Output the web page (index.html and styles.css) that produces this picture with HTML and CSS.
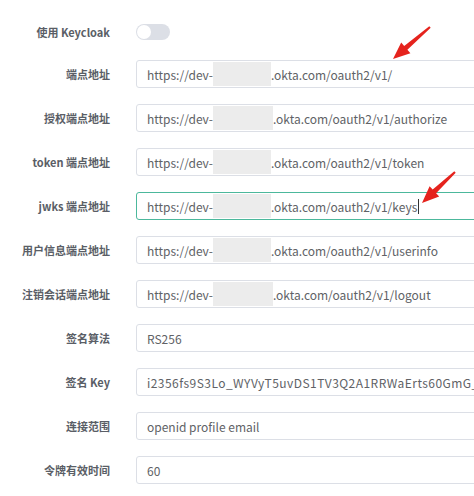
FILE: index.html
```html
<!DOCTYPE html>
<html lang="zh-CN">
<head>
  <meta charset="UTF-8">
  <meta name="viewport" content="width=device-width, initial-scale=1.0">
  <title>OIDC 设置</title>
  <link rel="stylesheet" href="styles.css">
</head>
<body>
  <div class="form">
    <div class="row row-switch">
      <label class="label">使用 Keycloak</label>
      <span class="switch"><span class="knob"></span></span>
    </div>
    <div class="row">
      <label class="label">端点地址</label>
      <div class="field">https://dev-<span class="mask w58"></span>.okta.com/oauth2/v1/</div>
    </div>
    <div class="row">
      <label class="label">授权端点地址</label>
      <div class="field">https://dev-<span class="mask w60"></span>.okta.com/oauth2/v1/authorize</div>
    </div>
    <div class="row">
      <label class="label">token 端点地址</label>
      <div class="field">https://dev-<span class="mask w58"></span>.okta.com/oauth2/v1/token</div>
    </div>
    <div class="row">
      <label class="label">jwks 端点地址</label>
      <div class="field focused">https://dev-<span class="mask w58"></span>.okta.com/oauth2/v1/keys<span class="caret"></span></div>
    </div>
    <div class="row">
      <label class="label">用户信息端点地址</label>
      <div class="field">https://dev-<span class="mask w58"></span>.okta.com/oauth2/v1/userinfo</div>
    </div>
    <div class="row">
      <label class="label">注销会话端点地址</label>
      <div class="field">https://dev-<span class="mask w60"></span>.okta.com/oauth2/v1/logout</div>
    </div>
    <div class="row">
      <label class="label">签名算法</label>
      <div class="field">RS256</div>
    </div>
    <div class="row">
      <label class="label">签名 Key</label>
      <div class="field key">i2356fs9S3Lo_WYVyT5uvDS1TV3Q2A1RRWaErts60GmG_c9xQeLk</div>
    </div>
    <div class="row">
      <label class="label">连接范围</label>
      <div class="field">openid profile email</div>
    </div>
    <div class="row">
      <label class="label">令牌有效时间</label>
      <div class="field">60</div>
    </div>
  </div>

  <!-- red pointer arrows drawn over the form -->
  <svg class="arrows" width="474" height="496" viewBox="0 0 474 496">
    <polygon points="393,59 410.4,53.2 407.4,49.8 430.7,27.8 429.3,26.2 404.2,46 401.2,42.6" />
    <polygon points="422,203 439.2,196.5 436.1,193.2 455.7,172.7 454.3,171.3 432.7,189.6 429.6,186.3" />
  </svg>
</body>
</html>
```

FILE: styles.css
```css
body {
  margin: 0;
  background: #ffffff;
  font-family: "Noto Sans CJK SC", "Noto Sans", sans-serif;
  width: 474px;
  height: 496px;
  overflow: hidden;
  position: relative;
}
.form {
  padding-top: 20px;
  display: flex;
  flex-direction: column;
  gap: 16px;
}
.row {
  display: grid;
  grid-template-columns: 110px 400px;
  column-gap: 26px;
  align-items: center;
  height: 28px;
}
.row-switch {
  height: 24px;
}
.label {
  text-align: right;
  font-size: 11px;
  font-weight: bold;
  color: #5a5e66;
  white-space: nowrap;
}
.switch {
  display: inline-block;
  position: relative;
  width: 34px;
  height: 16px;
  border-radius: 8px;
  background: #dcdfe6;
}
.knob {
  position: absolute;
  left: 1px;
  top: 1px;
  width: 14px;
  height: 14px;
  border-radius: 50%;
  background: #ffffff;
}
.field {
  box-sizing: border-box;
  height: 28px;
  padding: 0 10px;
  border: 1px solid #dcdfe6;
  border-radius: 3px;
  font-size: 12px;
  color: #606266;
  display: flex;
  align-items: center;
  white-space: nowrap;
  overflow: hidden;
}
.field.focused {
  border-color: #4cb89c;
}
/* long token, wider glyph run */
.field.key {
  letter-spacing: 0.45px;
}
.mask {
  display: inline-block;
  height: 24px;
  background: #ececec;
}
.w58 { width: 58px; }
.w60 { width: 60px; }
.caret {
  display: inline-block;
  width: 1px;
  height: 15px;
  margin-left: 1px;
  background: #333333;
}
.arrows {
  position: absolute;
  left: 0;
  top: 0;
  pointer-events: none;
}
.arrows polygon {
  fill: #e5231d;
}
```
